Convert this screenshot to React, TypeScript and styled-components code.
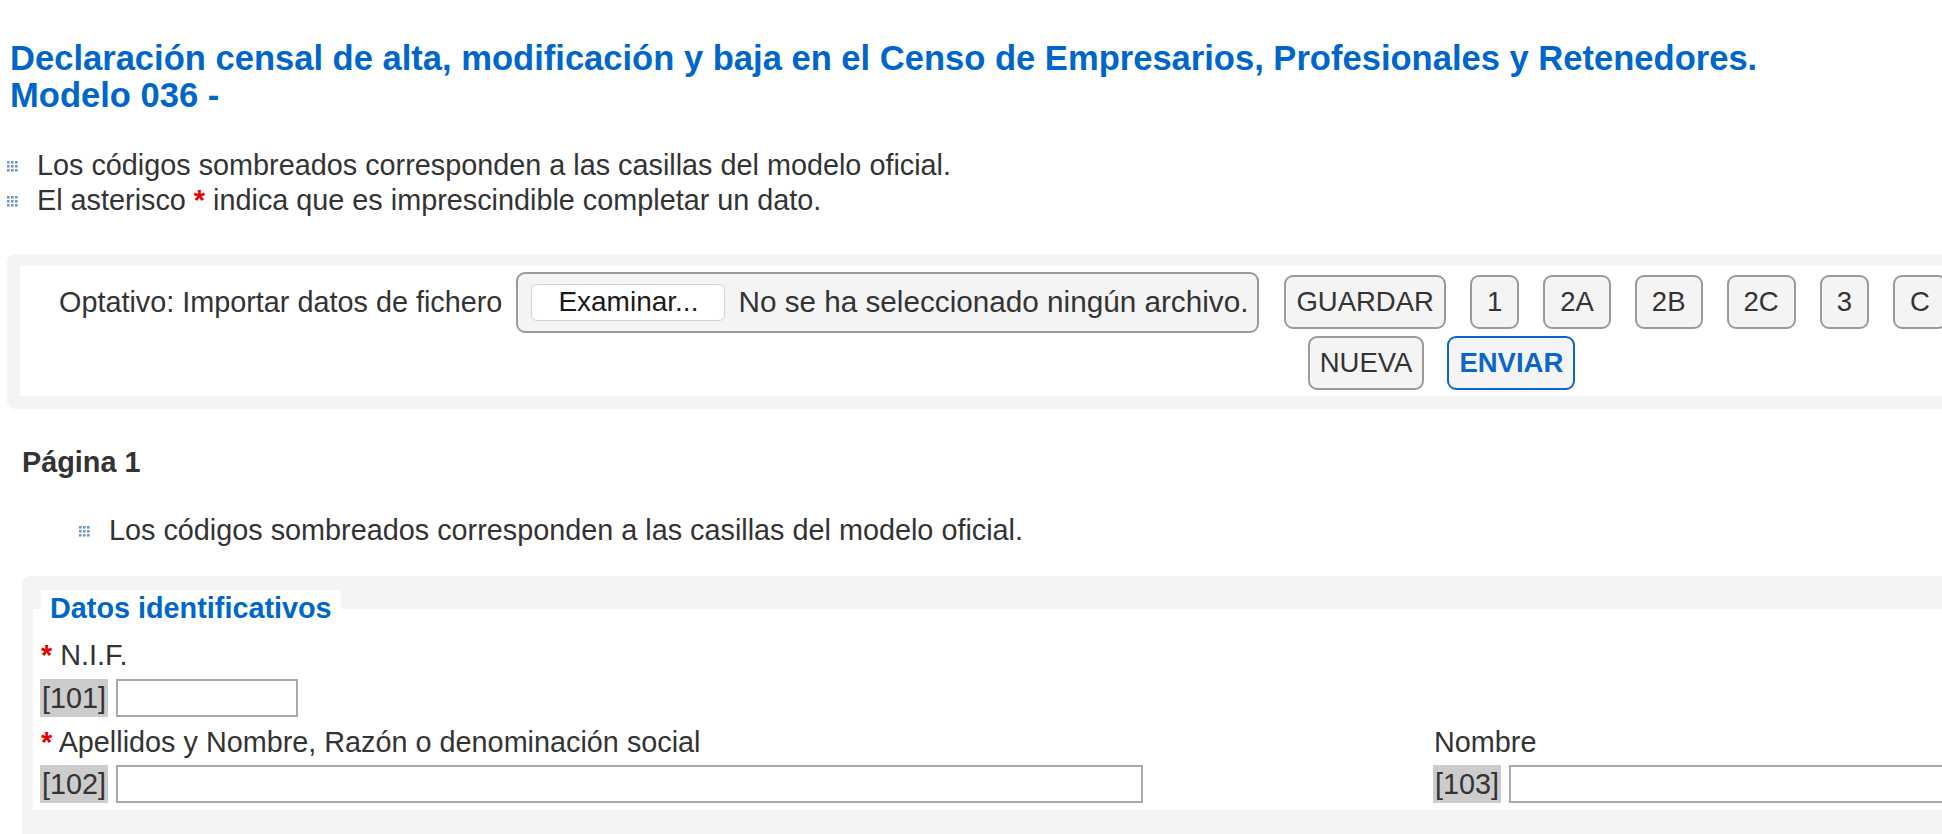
import styled, { createGlobalStyle } from 'styled-components';

const GlobalStyle = createGlobalStyle`
	html, body {
		margin: 0;
		overflow: hidden;
		background: #fff;
	}
	body {
		font-family: "Liberation Sans", Arial, sans-serif;
		font-size: 28.8px;
		color: #333;
	}
	* {
		box-sizing: border-box;
	}
`;

const DotGrid = () => (
	<svg width='11' height='11' viewBox='0 0 11 11'>
		{[0, 4, 8].flatMap(y =>
			[0, 4, 8].map(x => <rect key={`${x}-${y}`} x={x} y={y} width='2.6' height='2.6' fill='#6f97c2' />)
		)}
	</svg>
);

const pageButtons = ['1', '2A', '2B', '2C', '3', 'C'];

const App = () => {
	return (
		<Page>
			<GlobalStyle />
			<Title>
				Declaración censal de alta, modificación y baja en el Censo de Empresarios, Profesionales y Retenedores.
				<br />
				Modelo 036 -
			</Title>
			<NoteList $top={34} $inset={0}>
				<NoteItem>
					<DotGrid />
					<span>Los códigos sombreados corresponden a las casillas del modelo oficial.</span>
				</NoteItem>
				<NoteItem>
					<DotGrid />
					<span>
						El asterisco <Required>*</Required> indica que es imprescindible completar un dato.
					</span>
				</NoteItem>
			</NoteList>

			<ImportPanel>
				<ImportInner>
					<ToolRow>
						<ImportLabel>Optativo: Importar datos de fichero</ImportLabel>
						<FileBox>
							<BrowseButton type='button'>Examinar...</BrowseButton>
							<FileName>No se ha seleccionado ningún archivo.</FileName>
						</FileBox>
						<ButtonGroup>
							<ActionButton type='button'>GUARDAR</ActionButton>
							{pageButtons.map(label => (
								<ActionButton key={label} type='button' $page>
									{label}
								</ActionButton>
							))}
						</ButtonGroup>
					</ToolRow>
					<SecondRow>
						<ActionButton type='button'>NUEVA</ActionButton>
						<ActionButton type='button' $primary>
							ENVIAR
						</ActionButton>
					</SecondRow>
				</ImportInner>
			</ImportPanel>

			<Section>
				<PageHeading>Página 1</PageHeading>
				<NoteList $top={33} $inset={57}>
					<NoteItem>
						<DotGrid />
						<span>Los códigos sombreados corresponden a las casillas del modelo oficial.</span>
					</NoteItem>
				</NoteList>

				<GroupBox>
					<Legend>Datos identificativos</Legend>
					<GroupPanel>
						<FieldRow>
							<Field>
								<FieldLabel>
									<Required>*</Required> N.I.F.
								</FieldLabel>
								<InputLine>
									<Code>[101]</Code>
									<TextBox $width={182} />
								</InputLine>
							</Field>
						</FieldRow>
						<FieldRow $top={8}>
							<Field>
								<FieldLabel>
									<Required>*</Required> Apellidos y Nombre, Razón o denominación social
								</FieldLabel>
								<InputLine>
									<Code>[102]</Code>
									<TextBox $width={1027} />
								</InputLine>
							</Field>
							<Field>
								<FieldLabel>Nombre</FieldLabel>
								<InputLine>
									<Code>[103]</Code>
									<TextBox $width={700} />
								</InputLine>
							</Field>
						</FieldRow>
					</GroupPanel>
				</GroupBox>
			</Section>
		</Page>
	);
};

export default App;

const Page = styled.div`
	padding-left: 7px;
	width: 2900px;
`;

const Title = styled.h1`
	margin: 40px 0 0;
	padding-left: 3px;
	font-size: 34.56px;
	line-height: 37px;
	font-weight: bold;
	color: #0066cc;
`;

const NoteList = styled.ul<{ $top: number; $inset: number }>`
	list-style: none;
	margin: ${p => p.$top}px 0 0;
	padding: 0 0 0 ${p => p.$inset}px;
`;

const NoteItem = styled.li`
	display: flex;
	align-items: center;
	gap: 19px;
	line-height: 34.5px;

	svg {
		flex-shrink: 0;
		margin-top: 3px;
	}
`;

const Required = styled.span`
	color: #e60000;
	font-weight: bold;
`;

const ImportPanel = styled.div`
	margin-top: 37px;
	width: 2869px;
	padding: 12px 13px 13px;
	background: #f4f4f4;
	border-radius: 8px;
`;

const ImportInner = styled.div`
	background: #fff;
	padding: 5px 0 6px;
`;

const ToolRow = styled.div`
	display: flex;
	align-items: center;
	height: 62px;
	padding-left: 39px;
`;

const ImportLabel = styled.span`
	margin-right: 14px;
	white-space: nowrap;
`;

const FileBox = styled.div`
	display: flex;
	align-items: center;
	gap: 13px;
	height: 61px;
	padding: 0 9px 0 13px;
	border: 2px solid #9a9a9a;
	border-radius: 9px;
	background: #f4f4f4;
	margin-right: 25px;
`;

const BrowseButton = styled.button`
	height: 37px;
	padding: 0 26px;
	border: 1px solid #d2d2d2;
	border-radius: 6px;
	background: #fff;
	font-family: "Liberation Sans", Arial, sans-serif;
	font-size: 28px;
	color: #1a1a1a;
`;

const FileName = styled.span`
	font-size: 29.7px;
	white-space: nowrap;
`;

const ButtonGroup = styled.div`
	display: flex;
	gap: 24px;
`;

const ActionButton = styled.button<{ $page?: boolean; $primary?: boolean }>`
	height: 54px;
	padding: 0 ${p => (p.$page ? 15 : 10)}px;
	border: 2px solid ${p => (p.$primary ? '#0a66cc' : '#9a9a9a')};
	border-radius: 9px;
	background: #f4f4f4;
	font-family: "Liberation Sans", Arial, sans-serif;
	font-size: 27.5px;
	font-weight: ${p => (p.$primary ? 'bold' : 'normal')};
	color: ${p => (p.$primary ? '#0a66cc' : '#333')};
	white-space: nowrap;
`;

const SecondRow = styled.div`
	display: flex;
	justify-content: center;
	gap: 23px;
	margin-top: 3px;
`;

const Section = styled.div`
	padding-left: 15px;
`;

const PageHeading = styled.h2`
	margin: 36px 0 0;
	font-size: 28.8px;
	line-height: 34.56px;
	font-weight: bold;
`;

const GroupBox = styled.div`
	margin-top: 29px;
	width: 2400px;
	padding: 14px 0 40px 11px;
	background: #f4f4f4;
	border-radius: 8px;
`;

const Legend = styled.div`
	position: relative;
	display: inline-block;
	margin-left: 8px;
	padding: 0 9px;
	background: #fff;
	color: #0066cc;
	font-weight: bold;
	line-height: 37px;
`;

const GroupPanel = styled.div`
	margin-top: -18.5px;
	padding: 29.5px 0 7px 8px;
	background: #fff;
`;

const FieldRow = styled.div<{ $top?: number }>`
	display: grid;
	grid-template-columns: 1393px 1fr;
	margin-top: ${p => p.$top ?? 0}px;
`;

const Field = styled.div`
	display: flex;
	flex-direction: column;
	gap: 6px;
`;

const FieldLabel = styled.div`
	line-height: 34.5px;
	white-space: nowrap;
`;

const InputLine = styled.div`
	display: flex;
	gap: 8px;
	height: 38px;
`;

const Code = styled.span`
	margin-left: -1px;
	padding: 0 2px;
	background: #cccccc;
	line-height: 38px;
`;

const TextBox = styled.input<{ $width: number }>`
	width: ${p => p.$width}px;
	height: 38px;
	border: 2px solid #a9a9a9;
	background: #fff;
	padding: 0 4px;
	font: inherit;
`;
